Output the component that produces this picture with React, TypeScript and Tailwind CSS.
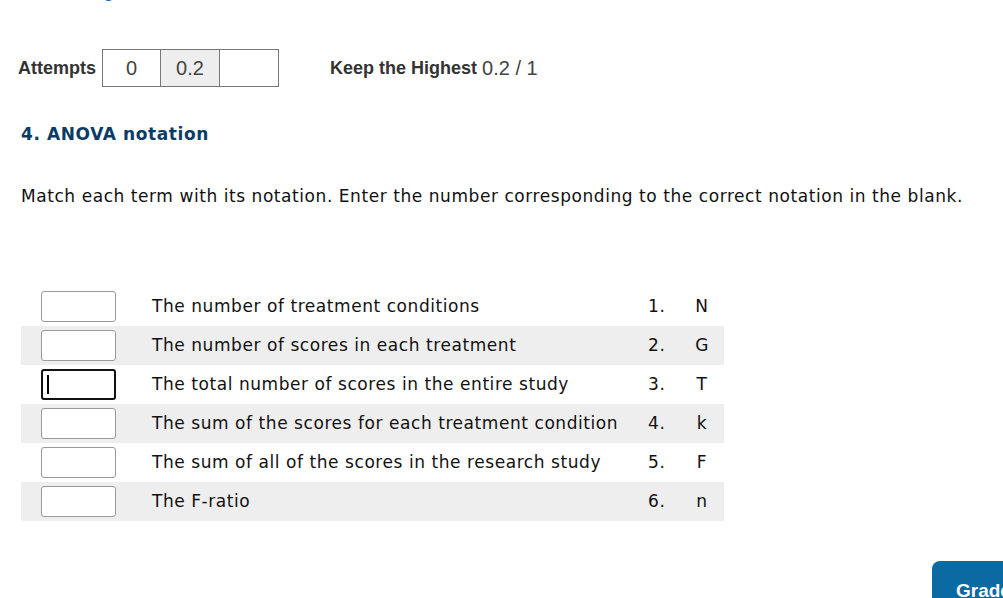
const rows = [
  { term: "The number of treatment conditions", num: "1.", sym: "N" },
  { term: "The number of scores in each treatment", num: "2.", sym: "G" },
  { term: "The total number of scores in the entire study", num: "3.", sym: "T" },
  { term: "The sum of the scores for each treatment condition", num: "4.", sym: "k" },
  { term: "The sum of all of the scores in the research study", num: "5.", sym: "F" },
  { term: "The F-ratio", num: "6.", sym: "n" },
];

const verdana = "font-['Verdana','DejaVu_Sans',sans-serif]";

export default function App() {
  return (
    <div className="relative h-[598px] w-[1003px] overflow-hidden bg-white text-black">
      <div className="ml-[104px] h-[3px] overflow-hidden">
        <span className="-mt-[17px] block font-['Liberation_Sans',sans-serif] text-[16px] leading-[20px] text-[#1a6fb0]">g</span>
      </div>

      <div className="mt-[46px] flex items-center pl-[18px] font-['Liberation_Sans',Arial,sans-serif] text-[#333]">
        <span className="mr-[6px] text-[18px] font-bold">Attempts</span>
        <div className="flex">
          <div className="flex h-[38px] w-[59px] items-center justify-center border border-[#777] text-[20px] text-[#444]">0</div>
          <div className="-ml-px flex h-[38px] w-[60px] items-center justify-center border border-[#777] bg-[#eeeeee] text-[20px] text-[#444]">0.2</div>
          <div className="-ml-px h-[38px] w-[60px] border border-[#777]" />
        </div>
        <span className="ml-[51px] text-[18px] font-bold">Keep the Highest</span>
        <span className="ml-[5px] text-[20px] text-[#444]">0.2 / 1</span>
      </div>

      <h2 className={`mt-[35px] pl-[21px] text-[17px] font-bold tracking-[0.6px] text-[#0b3b66] ${verdana}`}>4. ANOVA notation</h2>

      <p className={`mt-[36px] pl-[21px] text-[17px] tracking-[0.56px] text-[#111] ${verdana}`}>
        Match each term with its notation. Enter the number corresponding to the correct notation in the blank.
      </p>

      <div className={`ml-[21px] mt-[78px] w-[703px] text-[17px] tracking-[0.56px] text-[#111] ${verdana}`}>
        {rows.map((r, i) => (
          <div key={i} className={`flex h-[39px] items-center ${i % 2 === 1 ? "bg-[#eeeeee]" : "bg-white"}`}>
            <div className="ml-[20px] w-[111px]">
              {i === 2 ? (
                <div className="flex h-[31px] w-[75px] items-center rounded-[3px] border-2 border-[#111] bg-white pl-[4px]">
                  <span className="h-[19px] w-[2px] bg-black" />
                </div>
              ) : (
                <div className="h-[31px] w-[75px] rounded-[3px] border border-[#999] bg-white" />
              )}
            </div>
            <span className="flex-1 whitespace-nowrap">{r.term}</span>
            <span className="w-[42px]">{r.num}</span>
            <span className="w-[24px] text-center">{r.sym}</span>
            <span className="w-[10px]" />
          </div>
        ))}
      </div>

      <button className="absolute left-[932px] top-[561px] h-[50px] w-[100px] rounded-tl-[8px] bg-[#0b6aa2] pl-[24px] pt-[9px] text-left font-['Liberation_Sans',Arial,sans-serif] text-[19px] font-bold leading-[22px] text-white">
        Grade
      </button>
    </div>
  );
}
